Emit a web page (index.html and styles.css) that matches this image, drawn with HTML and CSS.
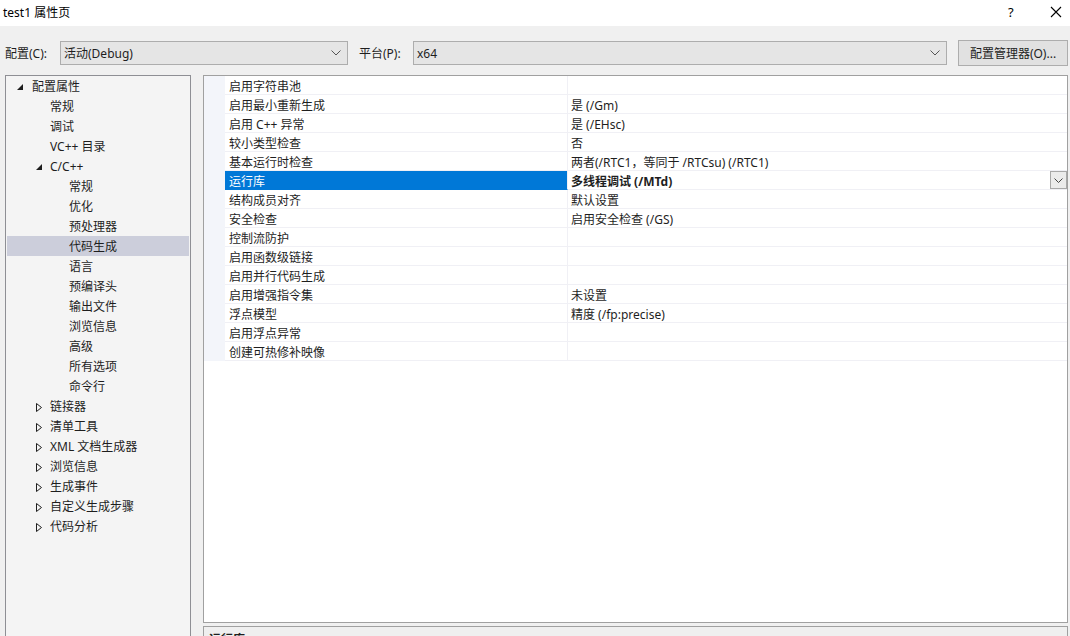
FILE: index.html
```html
<!DOCTYPE html>
<html lang="zh-CN">
<head>
    <meta charset="UTF-8">
    <title>test1 属性页</title>
    <link rel="stylesheet" href="styles.css">
</head>
<body>
    <div class="titlebar">
        <span class="title">test1 属性页</span>
        <span class="help">?</span>
        <span class="close">
            <svg width="12" height="12" viewBox="0 0 12 12"><path d="M1 1L11 11M11 1L1 11" stroke="#000" stroke-width="1.1"/></svg>
        </span>
    </div>

    <div class="toolbar">
        <label>配置(C):</label>
        <div class="combo config">
            <span>活动(Debug)</span>
            <svg width="10" height="6" viewBox="0 0 10 6"><path d="M0.5 0.5L5 5L9.5 0.5" fill="none" stroke="#555"/></svg>
        </div>
        <label class="plat">平台(P):</label>
        <div class="combo platform">
            <span>x64</span>
            <svg width="10" height="6" viewBox="0 0 10 6"><path d="M0.5 0.5L5 5L9.5 0.5" fill="none" stroke="#555"/></svg>
        </div>
        <div class="button">配置管理器(O)...</div>
    </div>

    <div class="main">
        <div class="tree">
            <div class="node"><span class="arrow open"><svg width="6" height="6" viewBox="0 0 6 6"><polygon points="6,0 6,6 0,6" fill="#1e1e1e"/></svg></span>配置属性</div>
            <div class="node l1">常规</div>
            <div class="node l1">调试</div>
            <div class="node l1">VC++ 目录</div>
            <div class="node l1b"><span class="arrow open"><svg width="6" height="6" viewBox="0 0 6 6"><polygon points="6,0 6,6 0,6" fill="#1e1e1e"/></svg></span>C/C++</div>
            <div class="node l2">常规</div>
            <div class="node l2">优化</div>
            <div class="node l2">预处理器</div>
            <div class="node l2 sel">代码生成</div>
            <div class="node l2">语言</div>
            <div class="node l2">预编译头</div>
            <div class="node l2">输出文件</div>
            <div class="node l2">浏览信息</div>
            <div class="node l2">高级</div>
            <div class="node l2">所有选项</div>
            <div class="node l2">命令行</div>
            <div class="node l1b"><span class="arrow"><svg width="6" height="9" viewBox="0 0 6 9"><polygon points="0.5,0.5 5.5,4.5 0.5,8.5" fill="none" stroke="#1e1e1e"/></svg></span>链接器</div>
            <div class="node l1b"><span class="arrow"><svg width="6" height="9" viewBox="0 0 6 9"><polygon points="0.5,0.5 5.5,4.5 0.5,8.5" fill="none" stroke="#1e1e1e"/></svg></span>清单工具</div>
            <div class="node l1b"><span class="arrow"><svg width="6" height="9" viewBox="0 0 6 9"><polygon points="0.5,0.5 5.5,4.5 0.5,8.5" fill="none" stroke="#1e1e1e"/></svg></span>XML 文档生成器</div>
            <div class="node l1b"><span class="arrow"><svg width="6" height="9" viewBox="0 0 6 9"><polygon points="0.5,0.5 5.5,4.5 0.5,8.5" fill="none" stroke="#1e1e1e"/></svg></span>浏览信息</div>
            <div class="node l1b"><span class="arrow"><svg width="6" height="9" viewBox="0 0 6 9"><polygon points="0.5,0.5 5.5,4.5 0.5,8.5" fill="none" stroke="#1e1e1e"/></svg></span>生成事件</div>
            <div class="node l1b"><span class="arrow"><svg width="6" height="9" viewBox="0 0 6 9"><polygon points="0.5,0.5 5.5,4.5 0.5,8.5" fill="none" stroke="#1e1e1e"/></svg></span>自定义生成步骤</div>
            <div class="node l1b"><span class="arrow"><svg width="6" height="9" viewBox="0 0 6 9"><polygon points="0.5,0.5 5.5,4.5 0.5,8.5" fill="none" stroke="#1e1e1e"/></svg></span>代码分析</div>
        </div>

        <div class="right">
            <div class="grid">
                <div class="row"><div class="strip"></div><div class="name">启用字符串池</div><div class="value"></div></div>
                <div class="row"><div class="strip"></div><div class="name">启用最小重新生成</div><div class="value">是 (/Gm)</div></div>
                <div class="row"><div class="strip"></div><div class="name">启用 C++ 异常</div><div class="value">是 (/EHsc)</div></div>
                <div class="row"><div class="strip"></div><div class="name">较小类型检查</div><div class="value">否</div></div>
                <div class="row"><div class="strip"></div><div class="name">基本运行时检查</div><div class="value">两者(/RTC1，等同于 /RTCsu) (/RTC1)</div></div>
                <div class="row active"><div class="strip"></div><div class="name">运行库</div><div class="value"><b>多线程调试 (/MTd)</b>
                    <span class="drop"><svg width="9" height="5" viewBox="0 0 9 5"><path d="M0.5 0.5L4.5 4.5L8.5 0.5" fill="none" stroke="#444"/></svg></span></div></div>
                <div class="row"><div class="strip"></div><div class="name">结构成员对齐</div><div class="value">默认设置</div></div>
                <div class="row"><div class="strip"></div><div class="name">安全检查</div><div class="value">启用安全检查 (/GS)</div></div>
                <div class="row"><div class="strip"></div><div class="name">控制流防护</div><div class="value"></div></div>
                <div class="row"><div class="strip"></div><div class="name">启用函数级链接</div><div class="value"></div></div>
                <div class="row"><div class="strip"></div><div class="name">启用并行代码生成</div><div class="value"></div></div>
                <div class="row"><div class="strip"></div><div class="name">启用增强指令集</div><div class="value">未设置</div></div>
                <div class="row"><div class="strip"></div><div class="name">浮点模型</div><div class="value">精度 (/fp:precise)</div></div>
                <div class="row"><div class="strip"></div><div class="name">启用浮点异常</div><div class="value"></div></div>
                <div class="row"><div class="strip"></div><div class="name">创建可热修补映像</div><div class="value"></div></div>
            </div>
            <div class="desc"><b>运行库</b></div>
        </div>
    </div>
</body>
</html>
```

FILE: styles.css
```css
body{
    margin:0;
    width:1070px;
    height:636px;
    overflow:hidden;
    background-color:#f0f0f0;
    font-family:"Noto Sans","Noto Sans CJK SC",sans-serif;
    font-size:12px;
    color:#1e1e1e;
}
.titlebar{
    height:26px;
    background-color:#ffffff;
    display:flex;
    align-items:center;
    padding-left:3px;
    padding-bottom:3px;
    box-sizing:border-box;
}
.title{
    flex:1;
    color:#000;
}
.help{
    width:20px;
    margin-right:22px;
    font-size:13px;
    color:#000;
}
.close{
    width:20px;
    display:flex;
}
.toolbar{
    display:flex;
    align-items:center;
    margin-top:14px;
    height:26px;
    padding-left:5px;
}
.toolbar label{
    width:55px;
}
.toolbar label.plat{
    margin-left:11px;
    width:54px;
}
.combo{
    height:24px;
    box-sizing:border-box;
    border:1px solid #adadad;
    background-color:#e5e5e5;
    display:flex;
    align-items:center;
    justify-content:space-between;
    padding:0 6px 0 3px;
}
.combo.config{
    width:288px;
}
.combo.platform{
    width:534px;
}
.button{
    margin-left:11px;
    width:110px;
    height:26px;
    box-sizing:border-box;
    border:1px solid #adadad;
    background-color:#e1e1e1;
    display:flex;
    align-items:center;
    justify-content:center;
}
.main{
    display:flex;
    margin-top:9px;
    padding-left:5px;
    gap:12px;
}
.tree{
    width:186px;
    height:580px;
    box-sizing:border-box;
    border:1px solid #8e8f94;
    background-color:#f4f4f4;
    padding:0 1px;
}
.node{
    height:20px;
    box-sizing:border-box;
    padding-top:2px;
    line-height:18px;
    padding-left:25px;
    position:relative;
    white-space:nowrap;
}
.node.l1{
    padding-left:43px;
}
.node.l1b{
    padding-left:43px;
}
.node.l2{
    padding-left:62px;
}
.node.sel{
    background-color:#cccedb;
}
.arrow{
    position:absolute;
    top:1px;
    height:20px;
    display:flex;
    align-items:center;
}
.node .arrow{
    left:10px;
}
.node.l1b .arrow{
    left:29px;
}
.right{
    width:865px;
    display:flex;
    flex-direction:column;
    gap:3px;
}
.grid{
    height:548px;
    box-sizing:border-box;
    border:1px solid #a0a0a0;
    background-color:#ffffff;
}
.row{
    display:flex;
    height:19px;
}
.strip{
    width:21px;
    background-color:#f3f5fa;
}
.name,
.value{
    box-sizing:border-box;
    padding-top:3px;
    line-height:15px;
    border-bottom:1px solid #f0f0f5;
    white-space:nowrap;
}
.name{
    width:343px;
    padding-left:4px;
    border-right:1px solid #f0f0f5;
}
.value{
    flex:1;
    padding-left:3px;
    position:relative;
}
.row.active .name{
    background-color:#0078d7;
    color:#ffffff;
    border-bottom-color:#0078d7;
}
.row.active .value b{
    font-weight:bold;
}
.drop{
    position:absolute;
    right:0;
    top:0;
    width:17px;
    height:18px;
    box-sizing:border-box;
    border:1px solid #a8a8a8;
    background-color:#ebebeb;
    display:flex;
    align-items:center;
    justify-content:center;
}
.desc{
    height:30px;
    box-sizing:border-box;
    border:1px solid #a0a0a0;
    background-color:#efefef;
    padding:3px 5px;
}
```
